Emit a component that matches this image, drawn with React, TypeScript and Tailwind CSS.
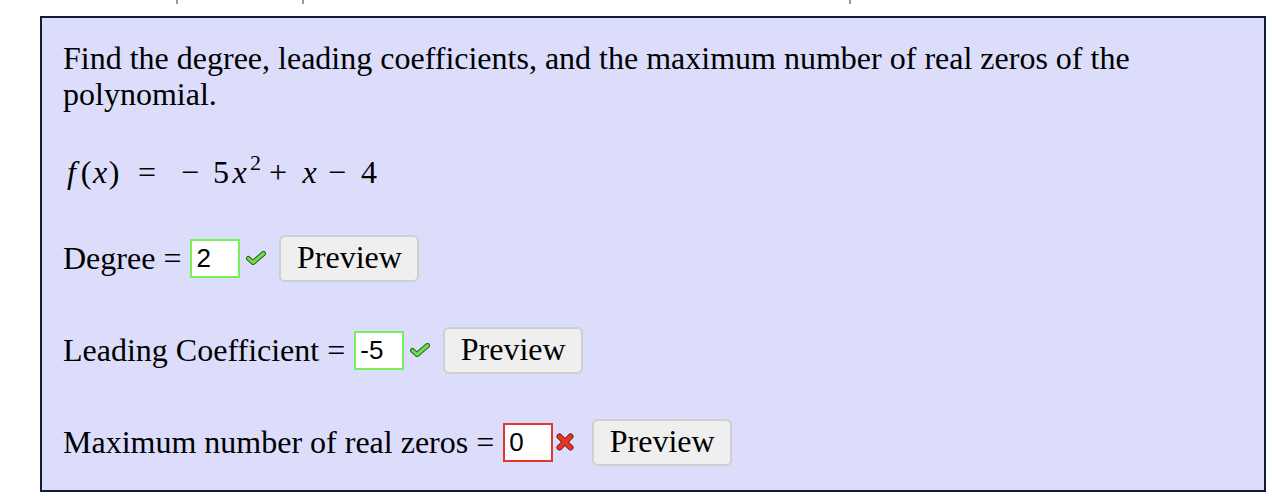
import React from "react";

const serif = { fontFamily: '"Liberation Serif", "Times New Roman", serif' };

function Check() {
  return (
    <svg width="20" height="14" viewBox="0 0 20 14" className="shrink-0">
      <path d="M2.5 7.5 L7 11.5 L17.5 2.5" fill="none" stroke="#2f5f1f" strokeWidth="5" strokeLinecap="round" strokeLinejoin="round" />
      <path d="M2.5 7.5 L7 11.5 L17.5 2.5" fill="none" stroke="#6ee04a" strokeWidth="3" strokeLinecap="round" strokeLinejoin="round" />
    </svg>
  );
}

function Cross() {
  return (
    <svg width="18" height="18" viewBox="0 0 18 18" className="shrink-0">
      <path d="M3.5 3.5 L14.5 14.5 M14.5 3.5 L3.5 14.5" fill="none" stroke="#7a1a12" strokeWidth="6" strokeLinecap="round" />
      <path d="M3.5 3.5 L14.5 14.5 M14.5 3.5 L3.5 14.5" fill="none" stroke="#e8352a" strokeWidth="4" strokeLinecap="round" />
    </svg>
  );
}

function Row({ label, value, ok }: { label: string; value: string; ok: boolean }) {
  return (
    <div className="flex items-center h-[48px]">
      <span className="mr-[9px]">{label}</span>
      <div
        className={
          "w-[50px] h-[39px] bg-white border-2 flex items-center pl-[4px] text-[26px] text-black " +
          (ok ? "border-[#77f05a]" : "border-[#e0382c]")
        }
        style={{ fontFamily: '"Liberation Sans", Arial, sans-serif' }}
      >
        {value}
      </div>
      <div className={"w-[39px] flex " + (ok ? "justify-start pl-[6px]" : "justify-start pl-[3px]")}>
        {ok ? <Check /> : <Cross />}
      </div>
      <button className="w-[140px] h-[47px] rounded-[6px] bg-[#efefef] border-2 border-[#cfcfcf] text-[32px] leading-none text-black flex items-center justify-center pb-[3px]">
        Preview
      </button>
    </div>
  );
}

export default function App() {
  return (
    <div className="w-[1272px] h-[500px] bg-white overflow-hidden" style={serif}>
      <div className="flex h-[16px]">
        <span className="ml-[176px] w-[2px] h-[4px] bg-[#999]" />
        <span className="ml-[124px] w-[2px] h-[4px] bg-[#999]" />
        <span className="ml-[545px] w-[2px] h-[4px] bg-[#999]" />
      </div>
      <div className="ml-[40px] w-[1226px] h-[476px] border-2 border-[#0e1c3a] bg-[#dcdcfb] pl-[21px] pt-[22px] text-black">
        <p className="text-[32px] leading-[36px] w-[1090px]">
          Find the degree, leading coefficients, and the maximum number of real zeros of the polynomial.
        </p>
        <div className="mt-[40px] text-[32px] leading-[40px] flex items-baseline" style={serif}>
          <i className="w-[17px] text-center">f</i>
          <span className="w-[12px] text-center">(</span>
          <i className="w-[16px] text-center">x</i>
          <span className="w-[12px] text-center">)</span>
          <span className="ml-[17px] w-[20px] text-center">=</span>
          <span className="ml-[23px] w-[20px] text-center">−</span>
          <span className="ml-[13px] w-[16px] text-center">5</span>
          <i className="w-[21px] text-center">x</i>
          <span className="w-[10px] text-[22px] relative -top-[13px]">2</span>
          <span className="ml-[8px] w-[20px] text-center">+</span>
          <i className="ml-[13px] w-[17px] text-center">x</i>
          <span className="ml-[10px] w-[18px] text-center">−</span>
          <span className="ml-[15px]">4</span>
        </div>
        <div className="mt-[38px] text-[32px] flex flex-col gap-[44px]">
          <Row label="Degree =" value="2" ok />
          <Row label="Leading Coefficient =" value="-5" ok />
          <Row label="Maximum number of real zeros =" value="0" ok={false} />
        </div>
      </div>
    </div>
  );
}
